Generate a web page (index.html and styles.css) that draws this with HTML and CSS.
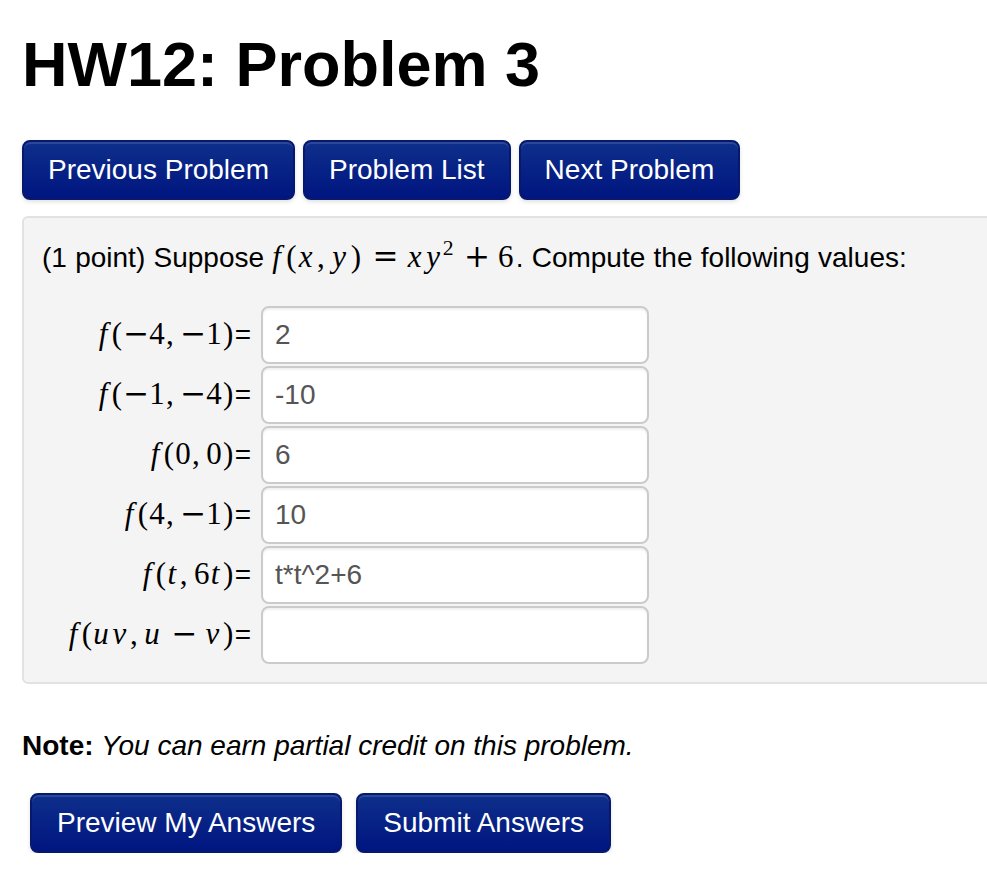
FILE: index.html
```html
<!doctype html>
<html lang="en">
<head>
	<meta charset="UTF-8">
	<title>HW12: Problem 3</title>
	<link rel="stylesheet" href="styles.css">
</head>
<body>
	<div class="page">
		<h1 class="title">HW12: Problem 3</h1>
		<div class="nav">
			<a class="btn" href="#">Previous Problem</a>
			<a class="btn" href="#">Problem List</a>
			<a class="btn" href="#">Next Problem</a>
		</div>
		<div class="problem">
			<p class="intro">(1 point) Suppose <span class="math"><i class="mf">f</i>(<i>x</i>,<span class="sp"></span><i>y</i>)<span class="rel">=</span><i>x</i><i>y</i><span class="sup">2</span><span class="bin">+</span>6</span>. Compute the following values:</p>
			<div class="answers">
				<label class="ans-label"><span class="math"><i class="mf">f</i>(<span class="neg">&minus;</span>4,<span class="sp"></span><span class="neg">&minus;</span>1)</span>=</label>
				<input class="ans-input" type="text" value="2">
				<label class="ans-label"><span class="math"><i class="mf">f</i>(<span class="neg">&minus;</span>1,<span class="sp"></span><span class="neg">&minus;</span>4)</span>=</label>
				<input class="ans-input" type="text" value="-10">
				<label class="ans-label"><span class="math"><i class="mf">f</i>(0,<span class="sp"></span>0)</span>=</label>
				<input class="ans-input" type="text" value="6">
				<label class="ans-label"><span class="math"><i class="mf">f</i>(4,<span class="sp"></span><span class="neg">&minus;</span>1)</span>=</label>
				<input class="ans-input" type="text" value="10">
				<label class="ans-label"><span class="math"><i class="mf">f</i>(<i>t</i>,<span class="sp"></span>6<i>t</i>)</span>=</label>
				<input class="ans-input" type="text" value="t*t^2+6">
				<label class="ans-label"><span class="math"><i class="mf">f</i>(<i>u</i><i>v</i>,<span class="sp"></span><i>u</i><span class="bin">&minus;</span><i>v</i>)</span>=</label>
				<input class="ans-input" type="text" value="">
			</div>
		</div>
		<p class="note"><b>Note:</b> <i>You can earn partial credit on this problem.</i></p>
		<div class="submit">
			<button class="btn" type="button">Preview My Answers</button>
			<button class="btn" type="button">Submit Answers</button>
		</div>
	</div>
</body>
</html>
```

FILE: styles.css
```css
*,*::before,*::after{box-sizing:border-box;}
html,body{
	margin:0;padding:0;
}
body{
	font-family:"Liberation Sans",Arial,sans-serif;
	font-size:28px;
	line-height:40px;
	color:#000;
	background:#fff;
	overflow-x:hidden;
}
.page{
	padding:0 0 0 22px;
}
.title{
	margin:30px 0 0;
	font-size:63px;
	line-height:69px;
	font-weight:bold;
}

/* buttons */
.btn{
	display:inline-block;
	height:60px;
	padding:8px 25px;
	font-family:inherit;
	font-size:28px;
	line-height:40px;
	color:#fff;
	text-decoration:none;
	background:linear-gradient(#0e2f8b,#001580);
	border:2px solid #06196c;
	border-radius:8px;
	box-shadow:inset 0 2px 0 rgba(255,255,255,.12),0 2px 4px rgba(0,0,0,.12);
	cursor:pointer;
}
.nav{
	display:flex;
	gap:8px;
	margin-top:41px;
}
.nav .btn{
	padding:8px 24px;
}
.submit{
	display:flex;
	gap:14px;
	margin:27px 0 0 8px;
}

/* problem box */
.problem{
	margin:16px -20px 0 0;
	padding:18px;
	background:#f4f4f4;
	border:2px solid #e2e2e2;
	border-radius:6px;
}
.intro{
	margin:0;
	word-spacing:.5px;
}
.answers{
	display:grid;
	grid-template-columns:209px 388px;
	column-gap:10px;
	row-gap:2px;
	align-items:baseline;
	margin-top:28px;
}
.ans-label{
	text-align:right;
	white-space:nowrap;
}
.ans-input{
	height:58px;
	padding:0 12px;
	font-family:"Liberation Sans",Arial,sans-serif;
	font-size:28px;
	color:#555;
	background:#fff;
	border:2px solid #cbcbcb;
	border-radius:8px;
	box-shadow:inset 0 2px 2px rgba(0,0,0,.06);
	outline:0;
}

/* math */
.math{
	font-family:"Liberation Serif","Times New Roman",serif;
	font-size:31px;
	letter-spacing:.04em;
	word-spacing:0;
	white-space:nowrap;
}
.intro .math{
	letter-spacing:.07em;
}
.math i{
	font-style:italic;
	padding-right:.08em;
}
.math .mf{
	padding-right:.1em;
}
.sp{
	display:inline-block;
	width:.17em;
}
.neg,.rel,.bin{
	font-family:"DejaVu Serif",serif;
	letter-spacing:0;
}
.rel{
	padding:0 .3em;
}
.bin{
	padding:0 .26em;
}
.sup{
	font-size:.7em;
	vertical-align:.55em;
	line-height:0;
	margin-left:-.08em;
}

.note{
	margin:42px 0 0;
}
```
